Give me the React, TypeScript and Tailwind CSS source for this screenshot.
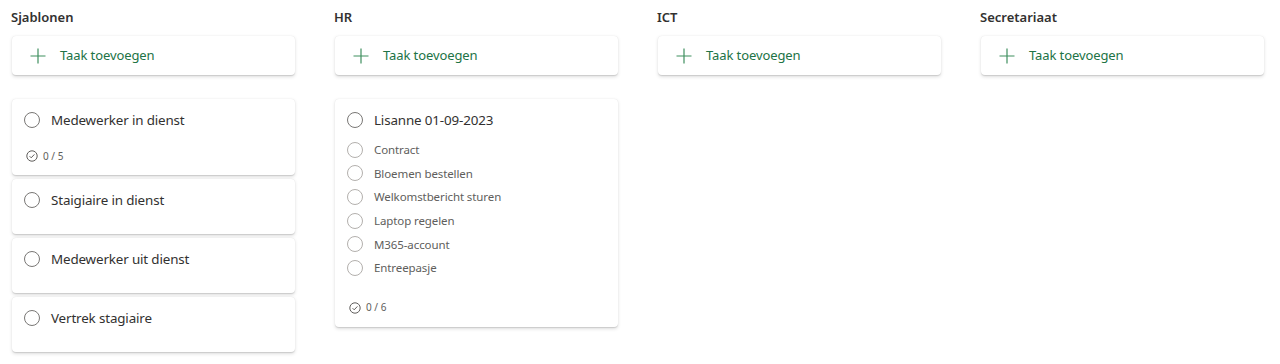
type Sub = { title: string }
type Task = { title: string; progress?: string; subtasks?: Sub[] }
type Bucket = { name: string; tasks: Task[] }

const buckets: Bucket[] = [
  {
    name: 'Sjablonen',
    tasks: [
      { title: 'Medewerker in dienst', progress: '0 / 5' },
      { title: 'Staigiaire in dienst' },
      { title: 'Medewerker uit dienst' },
      { title: 'Vertrek stagiaire' }
    ]
  },
  {
    name: 'HR',
    tasks: [
      {
        title: 'Lisanne 01-09-2023',
        progress: '0 / 6',
        subtasks: [
          { title: 'Contract' },
          { title: 'Bloemen bestellen' },
          { title: 'Welkomstbericht sturen' },
          { title: 'Laptop regelen' },
          { title: 'M365-account' },
          { title: 'Entreepasje' }
        ]
      }
    ]
  },
  { name: 'ICT', tasks: [] },
  { name: 'Secretariaat', tasks: [] }
]

const cardShadow =
  'rounded-[4px] bg-white shadow-[0_1.6px_3.6px_0_rgba(0,0,0,0.13),0_0.3px_0.9px_0_rgba(0,0,0,0.11)]'

export default function App() {
  return (
    <div
      className="grid h-[364px] grid-cols-4 gap-x-10 bg-white pl-3 pr-4 text-[#323130]"
      style={{ fontFamily: '"Noto Sans", "Open Sans", sans-serif' }}
    >
      {buckets.map((b) => (
        <div key={b.name} className="flex flex-col">
          <div className="h-9 pt-2 text-[13px] font-semibold leading-[18px] -ml-px">{b.name}</div>
          <button className={`${cardShadow} flex h-[39px] items-center gap-[14px] px-[18px] text-left`}>
            <svg width="16" height="16" viewBox="0 0 16 16" fill="none" stroke="#3f8f5f" strokeWidth="1.2">
              <path d="M8 0.5v15M0.5 8h15" />
            </svg>
            <span className="text-[13px] tracking-[-0.1px] text-[#217346]">Taak toevoegen</span>
          </button>
          {b.tasks.length > 0 && (
            <div className="mt-6 flex flex-col gap-1">
              {b.tasks.map((t) => (
                <TaskCard key={t.title} task={t} />
              ))}
            </div>
          )}
        </div>
      ))}
    </div>
  )
}

function Circle({ light }: { light?: boolean }) {
  return (
    <span
      className={`block h-4 w-4 shrink-0 rounded-full border-[1.5px] ${light ? 'border-[#b3b0ad]' : 'border-[#797775]'}`}
    />
  )
}

function TaskCard({ task }: { task: Task }) {
  return (
    <div className={`${cardShadow} px-3 pt-3 ${task.progress ? 'pb-[13px]' : 'pb-[25px]'}`}>
      <div className="flex h-[18px] items-center gap-[11px]">
        <Circle />
        <span className="text-[13.4px] leading-[18px] tracking-[-0.15px]">{task.title}</span>
      </div>
      {task.subtasks && (
        <div className="mt-[9px] flex flex-col">
          {task.subtasks.map((s) => (
            <div key={s.title} className="flex h-[23.6px] items-center gap-[11px]">
              <Circle light />
              <span className="text-[11.5px] tracking-[-0.1px] text-[#605e5c]">{s.title}</span>
            </div>
          ))}
        </div>
      )}
      {task.progress && (
        <div
          className={`${task.subtasks ? 'mt-[22px]' : 'mt-[21px]'} flex h-3 items-center gap-[5px] pl-[2px] text-[10px] text-[#605e5c]`}
        >
          <svg width="12" height="12" viewBox="0 0 12 12" fill="none" stroke="currentColor" strokeWidth="1">
            <circle cx="6" cy="6" r="5.2" />
            <path d="M3.6 6.2 5.2 7.8 8.4 4.4" />
          </svg>
          <span>{task.progress}</span>
        </div>
      )}
    </div>
  )
}
